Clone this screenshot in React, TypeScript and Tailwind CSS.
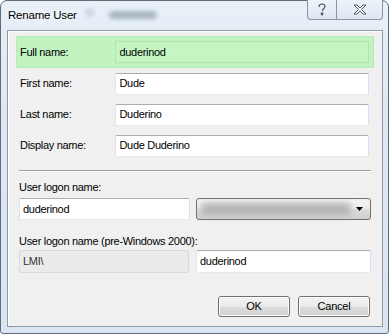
import type { ReactNode } from "react";

const font = { fontFamily: '"Segoe UI", "Liberation Sans", Arial, sans-serif' };

function TextBox({ value, className = "" }: { value: string; className?: string }) {
  return (
    <div
      className={`flex h-[22px] items-center rounded-[2px] border border-[#abadb3] border-b-[#e3e9ef] border-l-[#e2e3ea] border-r-[#dbdfe6] bg-white px-[3px] text-[11px] tracking-[-0.3px] text-black ${className}`}
    >
      {value}
    </div>
  );
}

function Row({ label, value }: { label: string; value: string }) {
  return (
    <div className="flex h-[31px] items-center pl-[4px] pr-[5px]">
      <span className="w-[96px] text-[11px] tracking-[-0.3px] text-black">{label}</span>
      <TextBox value={value} className="w-[255px]" />
    </div>
  );
}

function Button({ children }: { children: ReactNode }) {
  return (
    <div className="flex h-[21px] w-[72px] items-center justify-center rounded-[3px] border border-[#707070] bg-[linear-gradient(#f2f2f2_0%,#ebebeb_50%,#dddddd_51%,#cfcfcf_100%)] text-[11px] tracking-[-0.2px] text-black shadow-[inset_0_0_0_1px_#fcfcfc]">
      {children}
    </div>
  );
}

export default function App() {
  return (
    <div
      className="relative h-[334px] w-[390px] overflow-hidden bg-white"
      style={font}
    >
      <div className="flex h-[334px] w-[389px] flex-col rounded-t-[7px] rounded-b-[3px] border border-[#5f6b77] bg-[linear-gradient(#e8f0f8,#dce7f3_40%,#d9e5f2)]">
        {/* title bar */}
        <div className="relative flex h-[29px] items-center pl-[7px]">
          <div className="absolute left-[108px] top-[10px] h-[8px] w-[48px] rounded-full bg-[#8f9cab] opacity-70 blur-[2px]" />
          <div className="absolute left-[84px] top-[7px] h-[9px] w-[9px] rounded-full bg-[#c0ccd9] opacity-70 blur-[2px]" />
          <span className="relative text-[11.5px] tracking-[-0.2px] text-black [text-shadow:0_0_6px_#ffffff,0_0_10px_#ffffff]">
            Rename User
          </span>
          <div className="absolute right-[5px] top-[-1px] flex h-[20px]">
            <div className="flex w-[29px] items-center justify-center rounded-bl-[4px] border border-t-0 border-r-0 border-[#8a96a3] bg-[linear-gradient(#eef3f9,#dde7f2)]">
              <svg width="10" height="13" viewBox="0 0 10 13">
                <path
                  d="M2 4 C2 1.5 3.5 1 5 1 C6.5 1 8 1.8 8 3.6 C8 5.2 6 5.6 5.6 7 L5.6 8.2 M4.4 10 h1.2 v1.6 h-1.2 z"
                  fill="none"
                  stroke="#4a4f57"
                  strokeWidth="1.1"
                />
              </svg>
            </div>
            <div className="flex w-[47px] items-center justify-center rounded-br-[4px] border border-t-0 border-[#8a96a3] bg-[linear-gradient(#eef3f9,#dde7f2)]">
              <svg width="14" height="11" viewBox="0 0 14 11">
                <path
                  d="M1 1 h3 l3 3 l3 -3 h3 l-4.5 4.5 l4.5 4.5 h-3 l-3 -3 l-3 3 h-3 l4.5 -4.5 z"
                  fill="#f4f6f8"
                  stroke="#555b62"
                  strokeWidth="1"
                  strokeLinejoin="round"
                />
              </svg>
            </div>
          </div>
        </div>

        {/* client area */}
        <div className="ml-[6px] flex h-[297px] w-[376px] flex-col border border-[#8e9aa6] bg-[#f0f0f0] shadow-[inset_1px_1px_0_#ffffff] px-[8px] pt-[5px]">
          <div className="flex h-[32px] items-center border border-[#b6eab6] bg-[#c0f3c0] pl-[3px] pr-[4px]">
            <span className="w-[96px] text-[11px] tracking-[-0.3px] text-black">Full name:</span>
            <div className="flex h-[22px] w-[255px] items-center rounded-[2px] border border-[#b1e3b1] bg-[#c3f6c3] px-[3px] text-[11px] tracking-[-0.3px] text-black">
              duderinod
            </div>
          </div>
          <Row label="First name:" value="Dude" />
          <Row label="Last name:" value="Duderino" />
          <Row label="Display name:" value="Dude Duderino" />

          <div className="mx-[3px] mt-[9px] border-t border-[#a0a0a0] border-b border-b-white" />

          <div className="flex flex-col pl-[3px] pr-[3px] text-[11px] tracking-[-0.3px]">
            <span className="mt-[7px] h-[16px] leading-[16px] text-black">User logon name:</span>
            <div className="mt-[3px] flex items-center gap-[6px]">
              <TextBox value="duderinod" className="w-[171px]" />
              <div className="relative flex h-[22px] w-[176px] items-center rounded-[3px] border border-[#707070] bg-[linear-gradient(#f2f2f2_0%,#ebebeb_50%,#dddddd_51%,#cfcfcf_100%)] px-[4px]">
                <div className="h-[12px] w-[150px] rounded-[4px] bg-[#a9a9a9] opacity-80 blur-[3px]" />
                <svg className="absolute right-[6px] top-[8px]" width="8" height="5" viewBox="0 0 8 5">
                  <path d="M0 0 h7 l-3.5 4 z" fill="#000" />
                </svg>
              </div>
            </div>

            <span className="mt-[13px] h-[16px] leading-[16px] text-black">
              User logon name (pre-Windows 2000):
            </span>
            <div className="mt-[1px] flex items-center gap-[7px]">
              <div className="flex h-[23px] w-[170px] items-center rounded-[2px] border border-[#dadada] bg-[#ebebeb] px-[3px] text-[#333]">
                LMI\
              </div>
              <TextBox value="duderinod" className="h-[23px] w-[175px]" />
            </div>

            <div className="mt-[23px] flex justify-end gap-[8px] pr-[1px]">
              <Button>OK</Button>
              <Button>Cancel</Button>
            </div>
          </div>
        </div>
      </div>
    </div>
  );
}
